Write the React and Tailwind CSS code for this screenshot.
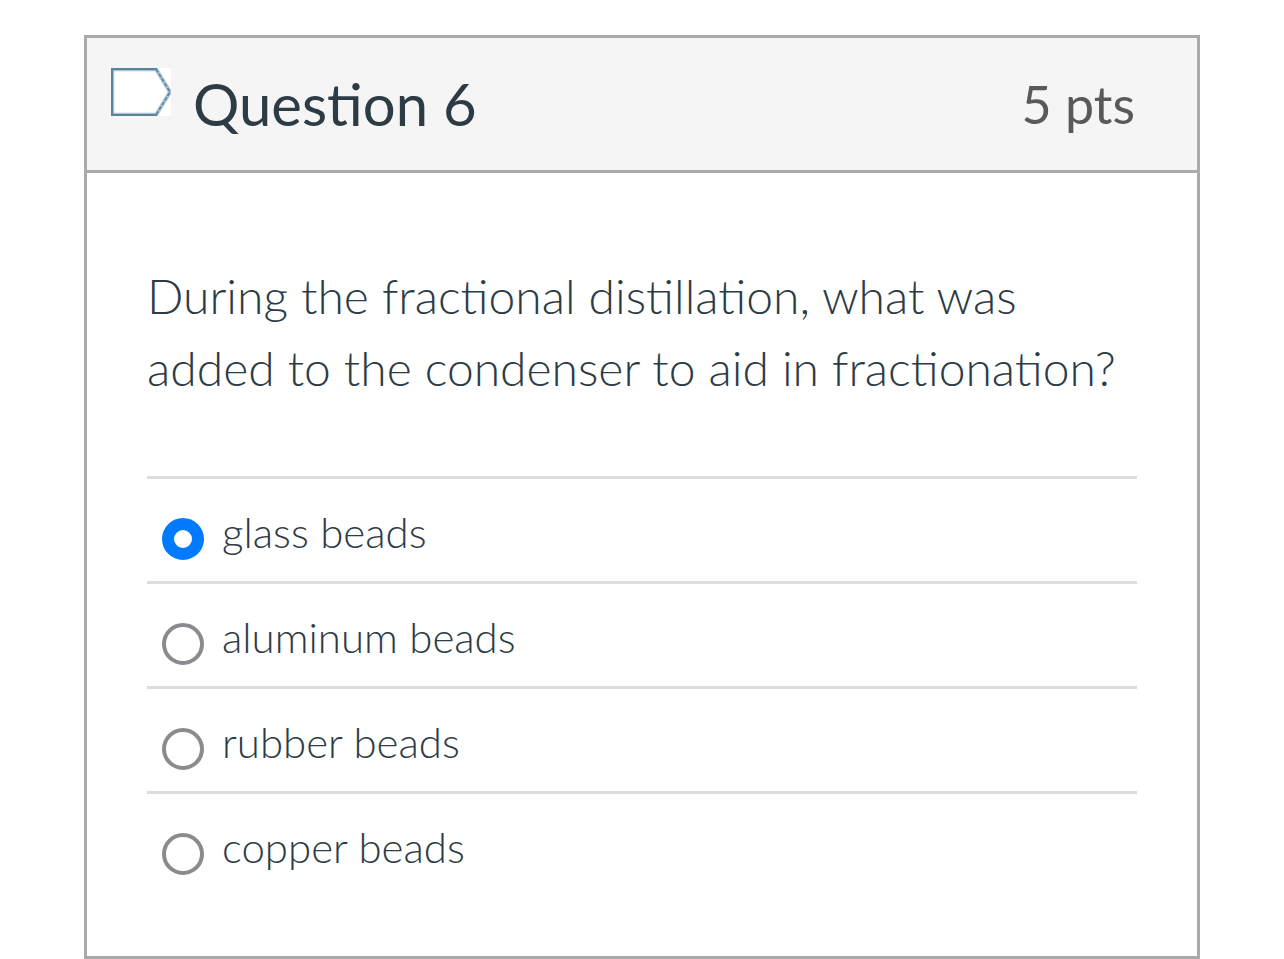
import React, { useState } from 'react'

const answers = ['glass beads', 'aluminum beads', 'rubber beads', 'copper beads']

function FlagIcon() {
  return (
    <svg width="60" height="48" viewBox="0 0 60 48" fill="none" aria-hidden="true">
      <rect width="60" height="48" fill="#fff" />
      <path d="M45 2.5H2.5V45.5H45" stroke="#a9c1cf" strokeWidth="1.4" />
      <path d="M45 1L59 24L45 47" stroke="#b3c8d4" strokeWidth="4" />
      <path d="M45 1L59 24L45 47" stroke="#5f8aa3" strokeWidth="1.8" strokeDasharray="4 1.5" />
      <path d="M46 1H1V47H46" stroke="#56839d" strokeWidth="2" />
    </svg>
  )
}

function Answer({ text, checked, onChange }) {
  return (
    <label className="flex items-start gap-[18px] border-t-3 border-[#dddddd] pt-7 pb-[21px] pl-[15px]">
      <input
        type="radio"
        name="question_6"
        checked={checked}
        onChange={onChange}
        className="mt-[11px] size-[42px] shrink-0 appearance-none rounded-full border-4 border-[#8a8a8f] checked:border-12 checked:border-[#007aff]"
      />
      <span className="text-[42px] leading-[51px]">{text}</span>
    </label>
  )
}

function App() {
  const [selected, setSelected] = useState(0)

  return (
    <main className="px-[84px] pt-[35px] font-['Lato',sans-serif] font-light text-[#2d3b45]">
      <section className="border-3 border-[#aaaaaa] bg-white">
        <header className="flex items-start justify-between border-b-3 border-[#aaaaaa] bg-[#f5f5f5] pt-[30px] pr-[62px] pb-[30px] pl-6 font-normal">
          <div className="flex items-start gap-[22px]">
            <FlagIcon />
            <h1 className="text-[58px] leading-[72px]">Question 6</h1>
          </div>
          <span className="text-[52px] leading-[72px] text-[#595959]">5 pts</span>
        </header>
        <div className="px-[60px] pt-[87px] pb-[60px]">
          <p className="text-[48px] leading-[72px]">
            During the fractional distillation, what was added to the condenser to aid in fractionation?
          </p>
          <div className="mt-[72px]">
            {answers.map((text, i) => (
              <Answer key={text} text={text} checked={selected === i} onChange={() => setSelected(i)} />
            ))}
          </div>
        </div>
      </section>
    </main>
  )
}

export default App
